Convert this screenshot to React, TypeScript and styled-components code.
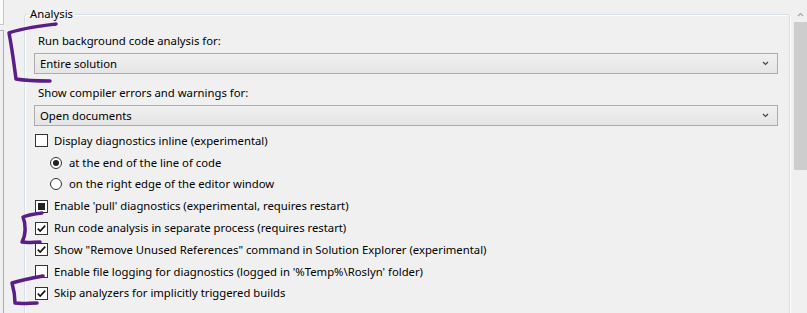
import React from 'react';
import styled, { createGlobalStyle } from 'styled-components';

const GlobalStyle = createGlobalStyle`
  html, body {
    margin: 0;
    padding: 0;
    background: #f0f0f0;
    overflow: hidden;
  }
  body {
    font-family: 'Noto Sans', 'Open Sans', sans-serif;
    font-size: 11.3px;
    color: #000;
  }
`;

type Option = {
  label: string;
  kind: 'check' | 'radio';
  state: 'on' | 'off' | 'mixed';
  indent?: boolean;
};

const options: Option[] = [
  { label: 'Display diagnostics inline (experimental)', kind: 'check', state: 'off' },
  { label: 'at the end of the line of code', kind: 'radio', state: 'on', indent: true },
  { label: 'on the right edge of the editor window', kind: 'radio', state: 'off', indent: true },
  { label: "Enable 'pull' diagnostics (experimental, requires restart)", kind: 'check', state: 'mixed' },
  { label: 'Run code analysis in separate process (requires restart)', kind: 'check', state: 'on' },
  { label: 'Show "Remove Unused References" command in Solution Explorer (experimental)', kind: 'check', state: 'on' },
  { label: "Enable file logging for diagnostics (logged in '%Temp%\\Roslyn' folder)", kind: 'check', state: 'off' },
  { label: 'Skip analyzers for implicitly triggered builds', kind: 'check', state: 'on' },
];

const Page = styled.div`
  position: relative;
  display: flex;
  height: 313px;
  width: 807px;
  overflow: hidden;
`;

const LeftRail = styled.div`
  width: 4px;
  display: flex;
  flex-direction: column;
`;

const RailTop = styled.div`
  height: 25px;
  background: #fbfbfb;
  border-right: 1px solid #c8c8c8;
  border-bottom: 1px solid #c8c8c8;
  box-sizing: border-box;
`;

const RailBody = styled.div`
  flex: 1;
  margin-top: 5px;
  border-right: 1px solid #adadad;
  border-top: 1px solid #adadad;
  box-sizing: border-box;
`;

const Main = styled.div`
  flex: 1;
  padding: 6px 4px 0 20px;
`;

const Group = styled.fieldset`
  margin: 0;
  padding: 0 11px 0 9px;
  height: 400px;
  border: 1px solid #d5dfe5;
  border-radius: 3px;
  box-shadow: inset 1px 1px 0 #fff, 1px 1px 0 #fff;
`;

const Legend = styled.legend`
  margin-left: -6px;
  padding: 0 2px;
  line-height: 16px;
  color: #000;
`;

const FieldLabel = styled.div`
  line-height: 16px;
  margin: 11px 0 4px 4px;
  white-space: nowrap;
`;

const Select = styled.div`
  height: 21px;
  box-sizing: border-box;
  border: 1px solid #acacac;
  background: linear-gradient(#f0f0f0, #e5e5e5);
  display: flex;
  align-items: center;
  justify-content: space-between;
  padding: 0 8px 0 5px;
  line-height: 16px;
`;

const OptionList = styled.div`
  margin-top: 4px;
  display: flex;
  flex-direction: column;
`;

const Row = styled.div<{ $indent?: boolean }>`
  height: 21.8px;
  display: flex;
  align-items: center;
  gap: 6px;
  padding-left: ${(p) => (p.$indent ? '16px' : '1px')};
  white-space: nowrap;
  line-height: 16px;
`;

const Box = styled.span`
  width: 13px;
  height: 13px;
  box-sizing: border-box;
  border: 1px solid #333;
  background: #fff;
  display: flex;
  align-items: center;
  justify-content: center;
  flex: none;
`;

const Mixed = styled.span`
  width: 7px;
  height: 7px;
  background: #222;
`;

const Radio = styled.span`
  width: 12px;
  height: 12px;
  margin-right: 1px;
  box-sizing: border-box;
  border: 1px solid #333;
  border-radius: 50%;
  background: #fff;
  display: flex;
  align-items: center;
  justify-content: center;
  flex: none;
`;

const Dot = styled.span`
  width: 6px;
  height: 6px;
  border-radius: 50%;
  background: #222;
`;

const ScrollBar = styled.div`
  width: 13px;
  display: flex;
  flex-direction: column;
`;

const ArrowCell = styled.div`
  height: 22px;
  display: flex;
  align-items: flex-end;
  justify-content: center;
  padding-bottom: 5px;
  box-sizing: border-box;
`;

const Thumb = styled.div`
  height: 148px;
  background: #cdcdcd;
`;

const Ink = styled.svg`
  position: absolute;
  left: 0;
  top: 0;
  pointer-events: none;
`;

const Chevron = () => (
  <svg width="7" height="5" viewBox="0 0 7 5">
    <path d="M1 1 L3.5 3.5 L6 1" fill="none" stroke="#444" strokeWidth="1.2" />
  </svg>
);

const Control: React.FC<{ opt: Option }> = ({ opt }) => {
  if (opt.kind === 'radio') {
    return <Radio>{opt.state === 'on' && <Dot />}</Radio>;
  }
  return (
    <Box>
      {opt.state === 'mixed' && <Mixed />}
      {opt.state === 'on' && (
        <svg width="11" height="11" viewBox="0 0 11 11">
          <path d="M1.8 5.6 L4.2 8 L9.2 2.6" fill="none" stroke="#111" strokeWidth="1.6" />
        </svg>
      )}
    </Box>
  );
};

export default function App() {
  return (
    <>
      <GlobalStyle />
      <Page>
        <LeftRail>
          <RailTop />
          <RailBody />
        </LeftRail>
        <Main>
          <Group>
            <Legend>Analysis</Legend>
            <FieldLabel>Run background code analysis for:</FieldLabel>
            <Select>
              <span>Entire solution</span>
              <Chevron />
            </Select>
            <FieldLabel>Show compiler errors and warnings for:</FieldLabel>
            <Select>
              <span>Open documents</span>
              <Chevron />
            </Select>
            <OptionList>
              {options.map((opt) => (
                <Row key={opt.label} $indent={opt.indent}>
                  <Control opt={opt} />
                  <span>{opt.label}</span>
                </Row>
              ))}
            </OptionList>
          </Group>
        </Main>
        <ScrollBar>
          <ArrowCell>
            <svg width="7" height="5" viewBox="0 0 7 5">
              <path d="M1 4 L3.5 1.5 L6 4" fill="none" stroke="#a6a6a6" strokeWidth="1.2" />
            </svg>
          </ArrowCell>
          <Thumb />
        </ScrollBar>
        <Ink width="807" height="313" viewBox="0 0 807 313">
          <g fill="none" stroke="#5b1d88" strokeWidth="3.5" strokeLinecap="round" strokeLinejoin="round">
            <path d="M56 24 C40 26 22 28 9 33 C12 48 14 64 16 79 C28 81 40 81 50 81" />
            <path d="M42 213 C34 214 28 215 23 217 C26 224 26 235 22 242 C28 243 34 242 40 242" />
            <path d="M43 276 C32 278 22 280 12 283 C14 290 15 296 15 303 C22 304 30 303 37 303" />
          </g>
        </Ink>
      </Page>
    </>
  );
}
